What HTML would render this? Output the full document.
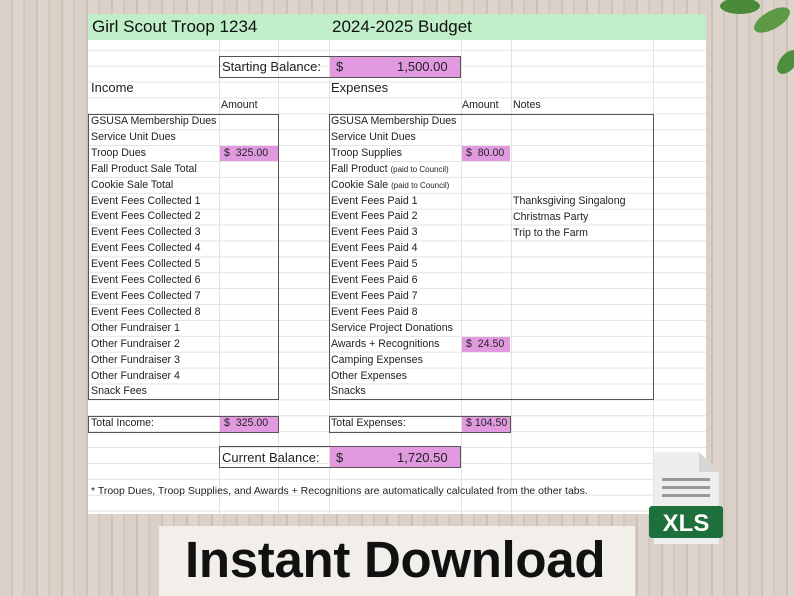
<!DOCTYPE html><html><head><style>
html,body{margin:0;width:794px;height:596px;overflow:hidden}
body{background:#d6ccc2;font-family:"Liberation Sans",sans-serif;position:relative}
.wood{position:absolute;inset:0;background:repeating-linear-gradient(90deg,#d9d0c7 0 11px,#cdc2b7 11px 13px,#ddd5cd 13px 23px,#d2c7bc 23px 25px)}
.sheet{position:absolute;left:88px;top:14px;width:618px;height:500px;background:#fff;
background-image:linear-gradient(#e3e3e3 1px,transparent 1px);background-size:100% 15.9px;background-position:0 4px}
.hdr{position:absolute;left:88px;top:14px;width:618px;height:26px;background:#bfeec8;font-size:17px;color:#111}
.v{position:absolute;top:40px;height:474px;width:1px;background:#e3e3e3}
.t{position:absolute;font-size:10.6px;color:#222;white-space:nowrap;line-height:15.9px}
.box{position:absolute;border:1px solid #555;box-sizing:border-box}
.pk{position:absolute;background:#e19ae0}
.ban{position:absolute;left:159px;top:526px;width:476px;height:70px;background:#f2eee9;overflow:hidden}
</style></head><body>
<div class="wood"></div>
<svg style="position:absolute;left:700px;top:0" width="94" height="90"><ellipse cx="40" cy="6" rx="20" ry="8" fill="#4b8a3a"/><ellipse cx="72" cy="20" rx="20" ry="9" fill="#5c9a45" transform="rotate(-30 72 20)"/><ellipse cx="88" cy="62" rx="14" ry="8" fill="#4e8d3c" transform="rotate(-50 88 62)"/></svg>
<div class="sheet"></div>
<div class="v" style="left:219px"></div><div class="v" style="left:278px"></div><div class="v" style="left:329px"></div><div class="v" style="left:461px"></div><div class="v" style="left:511px"></div><div class="v" style="left:653px"></div>
<div class="hdr"><span style="position:absolute;left:4px;top:3px">Girl Scout Troop 1234</span><span style="position:absolute;left:244px;top:3px">2024-2025 Budget</span></div>
<div class="box" style="left:219px;top:56px;width:242px;height:22px"></div>
<div class="pk" style="left:330px;top:57px;width:130px;height:20px"></div>
<div class="t" style="left:222px;top:59px;font-size:13px">Starting Balance:</div>
<div class="t" style="left:336px;top:59px;font-size:13px">$</div><div class="t" style="left:397px;top:59px;font-size:13px">1,500.00</div>
<div class="t" style="left:91px;top:80px;font-size:13px">Income</div>
<div class="t" style="left:331px;top:80px;font-size:13px">Expenses</div>
<div class="t" style="left:221px;top:98px">Amount</div>
<div class="t" style="left:462px;top:98px">Amount</div><div class="t" style="left:513px;top:98px">Notes</div>
<div class="box" style="left:88px;top:114px;width:191px;height:286px"></div>
<div class="box" style="left:329px;top:114px;width:325px;height:286px"></div>
<div class="pk" style="left:220px;top:146px;width:58px;height:15px"></div>
<div class="t" style="left:224px;top:146px">$ &nbsp;325.00</div>
<div class="pk" style="left:462px;top:146px;width:48px;height:15px"></div>
<div class="t" style="left:466px;top:146px">$ &nbsp;80.00</div>
<div class="pk" style="left:462px;top:337px;width:48px;height:15px"></div>
<div class="t" style="left:466px;top:337px">$ &nbsp;24.50</div>
<div class="t" style="left:91px;top:114px">GSUSA Membership Dues<br>Service Unit Dues<br>Troop Dues<br>Fall Product Sale Total<br>Cookie Sale Total<br>Event Fees Collected 1<br>Event Fees Collected 2<br>Event Fees Collected 3<br>Event Fees Collected 4<br>Event Fees Collected 5<br>Event Fees Collected 6<br>Event Fees Collected 7<br>Event Fees Collected 8<br>Other Fundraiser 1<br>Other Fundraiser 2<br>Other Fundraiser 3<br>Other Fundraiser 4<br>Snack Fees</div>
<div class="t" style="left:331px;top:114px">GSUSA Membership Dues<br>Service Unit Dues<br>Troop Supplies<br>Fall Product <span style="font-size:8px">(paid to Council)</span><br>Cookie Sale <span style="font-size:8px">(paid to Council)</span><br>Event Fees Paid 1<br>Event Fees Paid 2<br>Event Fees Paid 3<br>Event Fees Paid 4<br>Event Fees Paid 5<br>Event Fees Paid 6<br>Event Fees Paid 7<br>Event Fees Paid 8<br>Service Project Donations<br>Awards + Recognitions<br>Camping Expenses<br>Other Expenses<br>Snacks</div>
<div class="t" style="left:513px;top:194px">Thanksgiving Singalong<br>Christmas Party<br>Trip to the Farm</div>
<div class="box" style="left:88px;top:416px;width:191px;height:17px"></div>
<div class="pk" style="left:220px;top:417px;width:58px;height:15px"></div>
<div class="t" style="left:91px;top:416px">Total Income:</div><div class="t" style="left:224px;top:416px">$ &nbsp;325.00</div>
<div class="box" style="left:329px;top:416px;width:182px;height:17px"></div>
<div class="pk" style="left:462px;top:417px;width:48px;height:15px"></div>
<div class="t" style="left:331px;top:416px">Total Expenses:</div><div class="t" style="left:466px;top:416px">$ 104.50</div>
<div class="box" style="left:219px;top:446px;width:242px;height:22px"></div>
<div class="pk" style="left:330px;top:447px;width:130px;height:20px"></div>
<div class="t" style="left:222px;top:450px;font-size:13px">Current Balance:</div>
<div class="t" style="left:336px;top:450px;font-size:13px">$</div><div class="t" style="left:397px;top:450px;font-size:13px">1,720.50</div>
<div class="t" style="left:91px;top:484px;font-size:10.5px">* Troop Dues, Troop Supplies, and Awards + Recognitions are automatically calculated from the other tabs.</div>
<svg style="position:absolute;left:648px;top:452px" width="76" height="96"><path d="M6 0H51L71 20V92H6Z" fill="#eee"/><path d="M51 0V20H71Z" fill="#d6d6d6"/><rect x="14" y="26" width="48" height="3" fill="#999"/><rect x="14" y="34" width="48" height="3" fill="#999"/><rect x="14" y="42" width="48" height="3" fill="#999"/><rect x="1" y="54" width="74" height="32" rx="3" fill="#1d6f3b"/><text x="38" y="79" text-anchor="middle" font-family="Liberation Sans" font-weight="bold" font-size="24" fill="#fff">XLS</text></svg>
<div class="ban"><div style="position:absolute;left:26px;top:4px;white-space:nowrap;font-family:'Liberation Sans',sans-serif;font-weight:bold;font-size:51px;line-height:60px;color:#111;letter-spacing:-0.3px">Instant Download</div></div>
</body></html>
